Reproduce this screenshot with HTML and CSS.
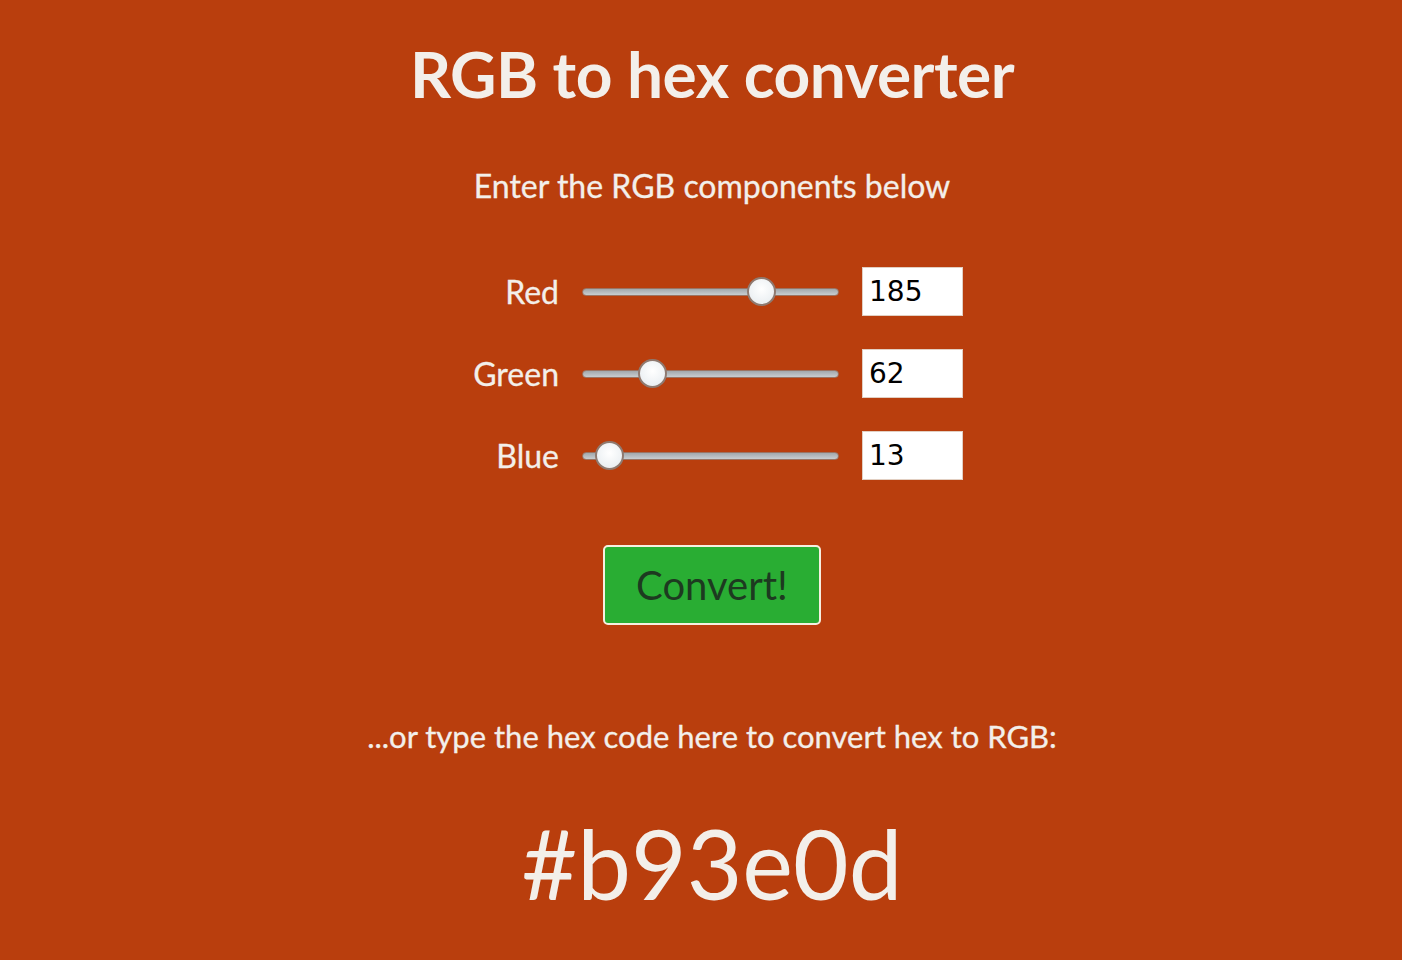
FILE: index.html
```html
<!DOCTYPE html>
<html lang="en">
<head>
<meta charset="utf-8">
<title>RGB to hex converter</title>
<link rel="stylesheet" href="styles.css">
</head>
<body>
<main class="page">
  <h1 class="title">RGB to hex converter</h1>
  <p class="lead">Enter the RGB components below</p>
  <div class="sliders">
    <label class="label" for="r">Red</label>
    <input class="range" type="range" id="r" min="0" max="255" value="185">
    <input class="num" type="text" value="185">
    <label class="label" for="g">Green</label>
    <input class="range" type="range" id="g" min="0" max="255" value="62">
    <input class="num" type="text" value="62">
    <label class="label" for="b">Blue</label>
    <input class="range" type="range" id="b" min="0" max="255" value="13">
    <input class="num" type="text" value="13">
  </div>
  <button class="convert" type="button">Convert!</button>
  <p class="or">...or type the hex code here to convert hex to RGB:</p>
  <input class="hex" type="text" value="#b93e0d">
</main>
</body>
</html>
```
FILE: styles.css
```css
html, body {
  margin: 0;
  padding: 0;
  background: #b93e0d;
}
body {
  font-family: Lato, "Open Sans", sans-serif;
  color: #f3efea;
}
.page {
  display: flex;
  flex-direction: column;
  align-items: center;
  padding-left: 22px;
  height: 960px;
  box-sizing: border-box;
  overflow: hidden;
}
.title {
  margin: 34px 0 0;
  font-size: 64px;
  font-weight: 700;
  line-height: 80px;
  letter-spacing: -0.5px;
}
.lead {
  margin: 52px 0 0;
  font-size: 32px;
  line-height: 40px;
  -webkit-text-stroke: 0.3px #f3efea;
}
.sliders {
  display: grid;
  grid-template-columns: 98px 257px 101px;
  column-gap: 23px;
  row-gap: 33px;
  align-items: center;
  margin-top: 61px;
}
.label {
  justify-self: end;
  font-size: 32px;
  line-height: 49px;
  -webkit-text-stroke: 0.3px #f3efea;
}
.range {
  -webkit-appearance: none;
  appearance: none;
  width: 257px;
  height: 30px;
  margin: 0;
  background: transparent;
}
.range::-webkit-slider-runnable-track {
  height: 8px;
  box-sizing: border-box;
  border-radius: 4px;
  background: linear-gradient(#a2a8ac, #c8cdd0);
  border: 1px solid #9b7463;
}
.range::-webkit-slider-thumb {
  -webkit-appearance: none;
  width: 29px;
  height: 29px;
  margin-top: -12px;
  border-radius: 50%;
  background: radial-gradient(circle at 50% 40%, #ffffff, #e4eaee);
  border: 2px solid #8f7a70;
  box-sizing: border-box;
}
.num {
  width: 101px;
  height: 49px;
  box-sizing: border-box;
  margin: 0;
  padding: 0 6px;
  border: 1px solid #e2cfc2;
  background: #ffffff;
  color: #000;
  font-family: "DejaVu Sans", sans-serif;
  font-size: 28px;
}
.convert {
  margin-top: 65px;
  width: 218px;
  height: 80px;
  border: 2px solid #f6efe0;
  border-radius: 5px;
  background: #29ad33;
  color: #1d3a20;
  font-family: Lato, sans-serif;
  font-size: 40px;
  padding: 0;
}
.or {
  margin: 91px 0 0;
  font-size: 31px;
  line-height: 40px;
  -webkit-text-stroke: 0.3px #f3efea;
}
.hex {
  margin-top: 52px;
  width: 700px;
  border: 0;
  background: transparent;
  color: #f3efea;
  text-align: center;
  font-family: Lato, sans-serif;
  font-size: 96px;
  line-height: 110px;
  padding: 0;
}
```
